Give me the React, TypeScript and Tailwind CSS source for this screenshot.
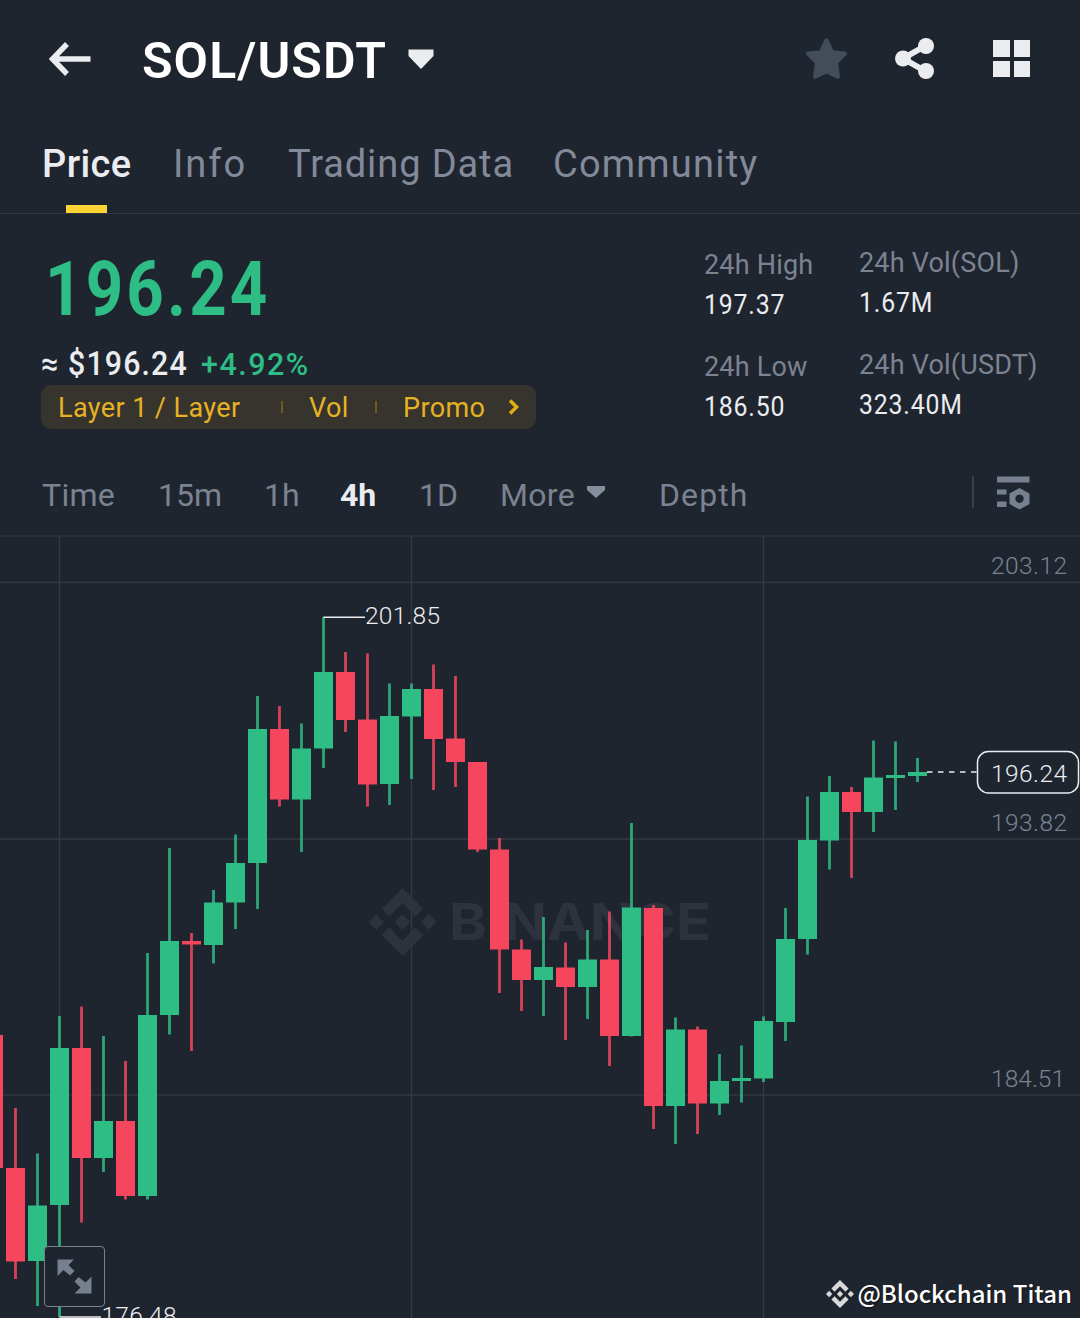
import type { ReactNode } from 'react';
import { SiBinance } from 'react-icons/si';

type Candle = { up: boolean; high: number; top: number; bottom: number; low: number };

const UP = '#2ebd85';
const DOWN = '#f6465d';

const c = (dir: 'u' | 'd', high: number, top: number, bottom: number, low: number): Candle => ({
  up: dir === 'u',
  high,
  top,
  bottom,
  low,
});

// oldest first, one candle every 22px
const candles: Candle[] = [
  c('d', 1035, 1035, 1168, 1168),
  c('d', 1108, 1168, 1261.5, 1279),
  c('u', 1153.5, 1205.5, 1261, 1306),
  c('u', 1016, 1048, 1205, 1317),
  c('d', 1006.5, 1048, 1158, 1222.5),
  c('u', 1036, 1121, 1158, 1172),
  c('d', 1061, 1121, 1196, 1199.5),
  c('u', 953, 1015, 1196, 1199.5),
  c('u', 848, 941, 1015, 1034.5),
  c('d', 933, 941, 944.5, 1051),
  c('u', 890, 902.5, 945, 963.5),
  c('u', 834.5, 863, 902.5, 929),
  c('u', 696, 729, 863, 909),
  c('d', 706, 729, 799.5, 806.5),
  c('u', 723.5, 748.5, 799.5, 852),
  c('u', 617, 672, 748.5, 768),
  c('d', 652, 672, 720, 732),
  c('d', 653.5, 719.5, 784.5, 806.5),
  c('u', 683.5, 716, 784, 805),
  c('u', 683.5, 689, 716.5, 779),
  c('d', 664.5, 689, 739, 790),
  c('d', 676, 738.5, 762, 787),
  c('d', 762, 762, 849.5, 852),
  c('d', 838, 849.5, 949.5, 993),
  c('d', 939.5, 949.5, 980, 1011),
  c('u', 917, 967, 980, 1016),
  c('d', 942.5, 967.5, 987, 1040),
  c('u', 930, 959.5, 987, 1019),
  c('d', 911.5, 959.5, 1036, 1066),
  c('u', 823, 907.5, 1036, 1036.5),
  c('d', 905, 908, 1106, 1129),
  c('u', 1017.5, 1029.5, 1106, 1144),
  c('d', 1026.5, 1029.5, 1103.5, 1134),
  c('u', 1054, 1081, 1103.5, 1115),
  c('u', 1045.5, 1078, 1081, 1102.5),
  c('u', 1016.5, 1021, 1078.5, 1082),
  c('u', 908, 939, 1022, 1041),
  c('u', 796.5, 840, 939, 954.5),
  c('u', 776, 792, 840.5, 869.5),
  c('d', 787, 792, 812, 878),
  c('u', 740.5, 777.5, 812, 832),
  c('u', 741.5, 775, 778, 810),
  c('u', 758, 772, 776, 782),
];

function Stat({ label, value }: { label: string; value: string }) {
  return (
    <div className="whitespace-nowrap text-[27px] leading-[40px]">
      <div className="tracking-[0.2px] text-[#7b8391]">{label}</div>
      <div className="origin-left scale-x-[0.92] font-[450] tracking-[0.900px] text-[#eaecef]">{value}</div>
    </div>
  );
}

function Interval({ className, children }: { className: string; children: ReactNode }) {
  return <div className={`shrink-0 whitespace-nowrap ${className}`}>{children}</div>;
}

function Header() {
  return (
    <header className="flex h-[122px] items-center pl-[49px] pr-[50px]">
      <svg className="mb-[5px] h-[34px] w-[42px] shrink-0" viewBox="0 0 42 34" fill="none" stroke="#eaecef" strokeWidth="5.4">
        <path d="M41.5 17H4M18 2L3.5 17L18 32" />
      </svg>
      <h1 className="ml-[51px] w-[266px] whitespace-nowrap text-[50px] font-semibold leading-[60px] tracking-[1.1px] text-white">SOL/USDT</h1>
      <svg className="mb-[5px] h-5 w-[26px] shrink-0" viewBox="0 0 26 20" fill="#eaecef">
        <path d="M.5 .5h25v6.500L13 20L.5 7z" />
      </svg>
      <svg className="mb-[5px] ml-auto h-[42px] w-[42px]" viewBox="0 0 42 42" fill="#434d5a" stroke="#434d5a" strokeWidth="4.500" strokeLinejoin="round">
        <path d="M20.500 2.500L25.800 14.600L38.600 15.700L29.800 24.400L31.700 38.600L20.500 33L9.300 38.600L11.200 24.400L2.400 15.700L15.200 14.600z" />
      </svg>
      <svg className="mb-[5px] ml-[47px] h-[42px] w-[40px]" viewBox="0 0 40 42" fill="#eaecef">
        <path d="M31 7.500L8 20.500L31 33.500" fill="none" stroke="#eaecef" strokeWidth="6" />
        <circle cx="31" cy="8" r="8" />
        <circle cx="8" cy="20.500" r="8" />
        <circle cx="31" cy="33" r="8" />
      </svg>
      <div className="mb-[5px] ml-[58px] grid h-[37px] w-[37px] grid-cols-2 gap-1">
        <div className="bg-[#eaecef]" />
        <div className="bg-[#eaecef]" />
        <div className="bg-[#eaecef]" />
        <div className="bg-[#eaecef]" />
      </div>
    </header>
  );
}

function Tabs() {
  return (
    <nav className="flex h-[92px] whitespace-nowrap border-b border-[#2f3641] pl-[42px] pt-[22px] text-[38px] font-[450] leading-10 text-[#828a99]">
      <div className="relative w-[90px] font-medium tracking-[0.4px] text-[#eaecef]">
        Price
        <div className="absolute bottom-0 left-6 h-2 w-[41px] bg-[#fcd535]" />
      </div>
      <div className="ml-[41px] w-[73px] tracking-[2px]">Info</div>
      <div className="ml-[42px] w-[226px] tracking-[0.900px]">Trading Data</div>
      <div className="ml-[39px] w-[206px] tracking-[1.200px]">Community</div>
    </nav>
  );
}

function Quote() {
  return (
    <section className="flex h-[236px] pl-[41px]">
      <div className="w-[663px]">
        <div className="ml-[4px] mt-[37px] w-[260px] origin-left scale-x-[0.86] text-[76px] font-bold leading-[76px] tracking-[3.700px] text-[#2ebd85]">196.24</div>
        <div className="mt-[16px] flex whitespace-nowrap leading-10">
          <div className="w-[160px] origin-left scale-x-[0.92] pt-[1px] text-[33px] font-medium tracking-[1.2px] text-[#eaecef]">≈ $196.24</div>
          <div className="origin-left scale-x-[0.95] pt-[1px] text-[32px] font-medium tracking-[1.600px] text-[#2ebd85]">+4.92%</div>
        </div>
        <div className="mt-[1px] flex h-11 w-[495px] items-center whitespace-nowrap rounded-[10px] bg-[#36342c] pl-[17px] text-[27px] text-[#e5b125]">
          <div className="w-[223px] pt-[2px] tracking-[0.4px]">Layer 1 / Layer</div>
          <div className="h-3 w-[2px] bg-[#6d5a1e]" />
          <div className="ml-[26px] w-[66px] pt-[2px] tracking-[0.4px]">Vol</div>
          <div className="h-3 w-[2px] bg-[#6d5a1e]" />
          <div className="ml-[26px] w-[106px] pt-[2px] tracking-[0.4px]">Promo</div>
          <svg className="h-4 w-3" viewBox="0 0 12 16" fill="none" stroke="#e0ad14" strokeWidth="3.600">
            <path d="M1 1.500L7.500 8L1 14.500" />
          </svg>
        </div>
      </div>
      <div className="mt-[30.500px] flex w-[155px] flex-col gap-[22px]">
        <Stat label="24h High" value="197.37" />
        <Stat label="24h Low" value="186.50" />
      </div>
      <div className="mt-[28.500px] flex flex-col gap-[22px]">
        <Stat label="24h Vol(SOL)" value="1.67M" />
        <Stat label="24h Vol(USDT)" value="323.40M" />
      </div>
    </section>
  );
}

function IntervalBar() {
  return (
    <nav className="flex h-[87px] border-b-2 border-[#2a303b] pl-[42px] pt-[25px] text-[32px] leading-10 text-[#7b8391]">
      <Interval className="w-[116px] tracking-[0.3px]">Time</Interval>
      <Interval className="w-[106px]">15m</Interval>
      <Interval className="w-[76px]">1h</Interval>
      <Interval className="w-[79px] font-bold text-[#eaecef]">4h</Interval>
      <Interval className="w-[81px]">1D</Interval>
      <Interval className="w-[87px] tracking-[0.3px]">More</Interval>
      <svg className="mt-[11px] h-3 w-[18px]" viewBox="0 0 18 12" fill="#848e9c">
        <path d="M0 0h18v4L9 12L0 4z" />
      </svg>
      <Interval className="ml-[54px] tracking-[1.100px]">Depth</Interval>
      <div className="ml-auto mt-[1px] h-8 w-[2px] bg-[#3a414d]" />
      <svg className="ml-[23px] mr-[50px] mt-[1px] h-[34px] w-[33px]" viewBox="0 0 33 34" fill="#76808f">
        <path d="M0 .5h32.500v6H0zM0 13.500h9.500v5H0zM0 25.500h9.500v5.500H0z" />
        <path fillRule="evenodd" d="M22.500 12L32.500 17.500V28L22.500 33.500L12.500 28V17.500zM22.500 18.500a4.200 4.200 0 1 0 .01 0z" />
      </svg>
    </nav>
  );
}

function Chart() {
  return (
    <div className="relative h-[781px]">
      <svg className="block h-[781px] w-full" viewBox="0 537 1080 781" fontFamily="Roboto, sans-serif" fontSize="24.500">
        <g stroke="#343a45" strokeWidth="1.300">
          {[59.5, 411.5, 763.5].map((x) => (
            <line key={x} x1={x} x2={x} y1={537} y2={1318} />
          ))}
          {[582.3, 839, 1095.2].map((y) => (
            <line key={y} x1={0} x2={1080} y1={y} y2={y} />
          ))}
        </g>

        <SiBinance x={368.5} y={888} size={68} color="#2d323d" />
        <text x="449" y="940" fill="#2d323d" fontFamily="Inter, sans-serif" fontSize="50.500" fontWeight="700" textLength="262" lengthAdjust="spacingAndGlyphs">
          BINANCE
        </text>

        {candles.map((k, i) => {
          const x = 22 * i - 6.5;
          const fill = k.up ? UP : DOWN;
          return (
            <g key={i} fill={fill}>
              <rect x={x - 1.4} y={k.high} width={2.8} height={k.low - k.high} opacity={0.85} />
              <rect x={x - 9.5} y={k.top} width={19} height={k.bottom - k.top} />
            </g>
          );
        })}

        <g stroke="#eaecef" strokeWidth="1.500" fill="none">
          <path d="M323.500 617.300H365M59.500 1317H101" />
          <path d="M927 772H977" strokeDasharray="5.500 5.500" />
          <rect x="977.500" y="751.500" width="101" height="41.500" rx="11" fill="#1f252f" />
        </g>

        <g fill="#eaecef" fontWeight="350">
          <text x="365" y="624" textLength="75">201.85</text>
          <text x="101.500" y="1323.500" textLength="75">176.48</text>
          <text x="991" y="782" textLength="76">196.24</text>
        </g>
        <g fill="#7b8391" fontWeight="350">
          <text x="991" y="574" textLength="76">203.12</text>
          <text x="991" y="831" textLength="76">193.82</text>
          <text x="991" y="1087" textLength="74">184.51</text>
        </g>
      </svg>

      <button className="absolute left-[44px] top-[709px] h-[61px] w-[61px] rounded-[4px] border-[1.500px] border-[#76808f] bg-[#1f252f]">
        <svg className="absolute left-[12px] top-[12px] h-[35px] w-[35px]" viewBox="0 0 35 35" fill="#76808f">
          <path d="M.5 .5H17L11.600 6L17.500 12L13 16.500L6.500 11L.5 17zM34.500 34.500H17.500L23.500 28.500L17.500 22.500L21.500 18L28.500 23.500L34.500 17.500z" />
        </svg>
      </button>

      <div className="absolute bottom-[8px] right-[8px] flex items-center gap-[3px] text-white">
        <SiBinance className="h-7 w-7 text-[#d9d9d9]" />
        <span className="mb-[1px] whitespace-nowrap font-['Noto_Sans_CJK_SC',sans-serif] text-[24px] font-medium leading-8 [text-shadow:1px_1px_1px_#0008]">@Blockchain Titan</span>
      </div>
    </div>
  );
}

export default function App() {
  return (
    <div className="h-[1318px] w-[1080px] overflow-hidden bg-[#1f252f] font-[Roboto,sans-serif]">
      <Header />
      <Tabs />
      <Quote />
      <IntervalBar />
      <Chart />
    </div>
  );
}
